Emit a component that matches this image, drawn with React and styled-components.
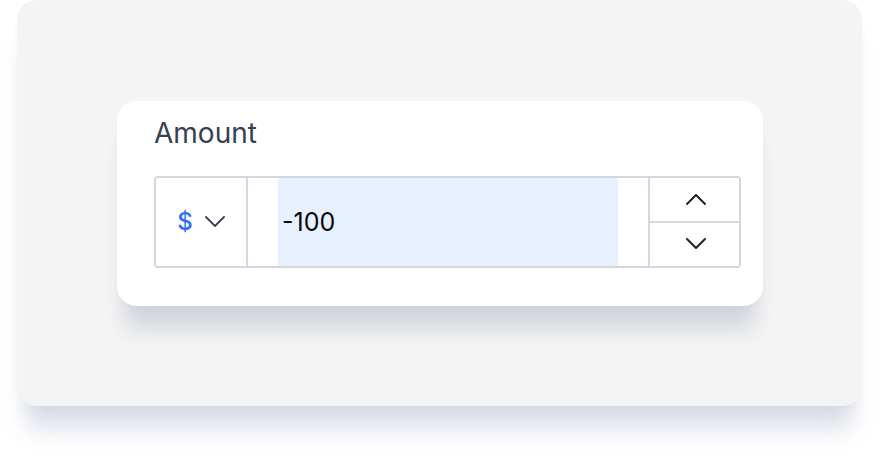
import React from "react";
import styled, { createGlobalStyle } from "styled-components";

const Global = createGlobalStyle`
  html, body { margin: 0; padding: 0; background: #ffffff; }
  body { font-family: Inter, "Noto Sans", sans-serif; }
  * { box-sizing: border-box; }
`;

const Page = styled.div`
  width: 880px;
  height: 465px;
  padding: 0 18px 0 17px;
`;

const Panel = styled.div`
  height: 406px;
  background: #f4f4f4;
  border-radius: 20px;
  display: flex;
  align-items: center;
  justify-content: center;
  box-shadow: 0 32px 22px -8px rgba(150, 158, 185, 0.3), 0 10px 16px -8px rgba(150, 158, 185, 0.2);
`;

const Card = styled.div`
  width: 646px;
  height: 205px;
  margin-right: -1px;
  background: #ffffff;
  border-radius: 20px;
  padding: 14px 22px 38px 37px;
  box-shadow: 0 32px 20px -8px rgba(150, 158, 185, 0.32), 0 10px 16px -8px rgba(150, 158, 185, 0.2);
`;

const Label = styled.div`
  font-family: Inter, sans-serif;
  font-size: 28px;
  line-height: 36px;
  color: #374151;
  margin-bottom: 25px;
`;

const Group = styled.div`
  display: flex;
  height: 92px;
  border: 2px solid #d3d7df;
  border-radius: 4px;
  overflow: hidden;
`;

const Currency = styled.button`
  flex: 0 0 92px;
  border: 0;
  border-right: 2px solid #d3d7df;
  background: #ffffff;
  display: flex;
  align-items: center;
  justify-content: center;
  gap: 11px;
  padding: 0 0 0 1px;
  cursor: pointer;
`;

const Dollar = styled.span`
  font-family: Inter, sans-serif;
  font-size: 24px;
  font-weight: 500;
  line-height: 1;
  color: #2f6ef6;
`;

const Field = styled.div`
  flex: 1 1 auto;
  min-width: 0;
  display: flex;
  padding: 0 30px;
  background: #ffffff;
`;

const Input = styled.input`
  flex: 1;
  width: 100%;
  min-width: 0;
  border: 0;
  outline: none;
  background: #e7f0fe;
  padding: 0 0 0 4px;
  font-family: Inter, sans-serif;
  font-size: 25px;
  color: #0a0a0a;
`;

const Stepper = styled.div`
  flex: 0 0 91px;
  border-left: 2px solid #d3d7df;
  display: flex;
  flex-direction: column;
`;

const StepButton = styled.button`
  flex: 1;
  border: 0;
  border-top: ${(p) => (p.$divider ? "2px solid #d3d7df" : "0")};
  background: #ffffff;
  display: flex;
  align-items: center;
  justify-content: center;
  padding: 0 0 0 2px;
  cursor: pointer;
`;

const Chevron = ({ up, color }) => (
  <svg width="22" height="12" viewBox="0 0 22 12" fill="none">
    <path
      d={up ? "M2 11 L11 2 L20 11" : "M2 1 L11 10 L20 1"}
      stroke={color}
      strokeWidth="1.9"
      strokeLinecap="round"
      strokeLinejoin="round"
    />
  </svg>
);

export default function App() {
  return (
    <>
      <Global />
      <Page>
        <Panel>
          <Card>
            <Label>Amount</Label>
            <Group>
              <Currency>
                <Dollar>$</Dollar>
                <Chevron color="#3d4654" />
              </Currency>
              <Field>
                <Input defaultValue="-100" />
              </Field>
              <Stepper>
                <StepButton>
                  <Chevron up color="#1b1f27" />
                </StepButton>
                <StepButton $divider>
                  <Chevron color="#1b1f27" />
                </StepButton>
              </Stepper>
            </Group>
          </Card>
        </Panel>
      </Page>
    </>
  );
}
